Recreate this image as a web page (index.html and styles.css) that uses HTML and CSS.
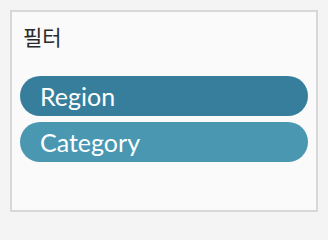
FILE: index.html
```html
<!DOCTYPE html>
<html lang="ko">
<head>
<meta charset="utf-8">
<link rel="stylesheet" href="styles.css">
</head>
<body>
<div class="panel">
  <div class="title">필터</div>
  <div class="pills">
    <div class="pill pill-dark">Region</div>
    <div class="pill pill-light">Category</div>
  </div>
</div>
</body>
</html>
```
FILE: styles.css
```css
html, body {
  margin: 0;
  padding: 0;
}
body {
  background: #f4f4f4;
  width: 328px;
  height: 220px;
  padding: 10px;
  box-sizing: border-box;
}
.panel {
  width: 308px;
  height: 202px;
  box-sizing: border-box;
  border: 2px solid #d8d8d8;
  background: #fafafa;
  padding: 10px 8px 0 8px;
}
.title {
  font-family: "Noto Sans CJK KR", "Noto Sans", sans-serif;
  font-size: 21px;
  line-height: 28px;
  color: #2a2a2a;
  padding-left: 3px;
}
.pills {
  margin-top: 26px;
  display: flex;
  flex-direction: column;
  gap: 6px;
}
.pill {
  height: 40px;
  line-height: 40px;
  border-radius: 20px;
  padding-left: 20px;
  font-family: Lato, "Liberation Sans", sans-serif;
  font-size: 25px;
  color: #ffffff;
}
.pill-dark {
  background: #367e9b;
}
.pill-light {
  background: #4a97b2;
}
```
